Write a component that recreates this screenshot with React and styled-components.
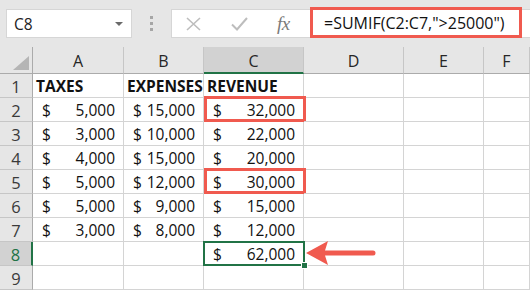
import React from "react";
import styled, { createGlobalStyle, css } from "styled-components";

const Global = createGlobalStyle`
  html, body { margin: 0; padding: 0; background: #fff; }
  body { font-family: "Open Sans", "Noto Sans", sans-serif; }
  #root { width: 530px; height: 290px; overflow: hidden; }
`;

const Page = styled.div`
  width: 530px;
  height: 290px;
  display: flex;
  flex-direction: column;
  overflow: hidden;
  background: #fff;
`;

const Toolbar = styled.div`
  height: 47px;
  flex: none;
  background: #e6e6e6;
  display: flex;
  align-items: flex-start;
  padding: 9px 0 0 6px;
  box-sizing: border-box;
`;

const NameBox = styled.div`
  width: 126px;
  height: 29px;
  box-sizing: border-box;
  background: #fff;
  border: 1px solid #d6d6d6;
  display: flex;
  align-items: center;
  justify-content: space-between;
  padding: 0 8px 0 7px;
  font-size: 15.5px;
  color: #222;
`;

const Caret = styled.span`
  width: 0;
  height: 0;
  border-left: 4px solid transparent;
  border-right: 4px solid transparent;
  border-top: 4px solid #6a6a6a;
`;

const Grip = styled.div`
  width: 39px;
  height: 29px;
  display: flex;
  flex-direction: column;
  align-items: center;
  justify-content: center;
  gap: 3px;
`;

const Dot = styled.span`
  width: 3px;
  height: 3px;
  background: #a6a6a6;
`;

const FormulaBox = styled.div`
  flex: 1;
  height: 29px;
  box-sizing: border-box;
  background: #fff;
  border: 1px solid #d6d6d6;
  border-right: none;
  display: flex;
  align-items: center;
  padding-left: 14px;
`;

const IconSlot = styled.span`
  width: ${(p) => p.$w}px;
  display: flex;
  align-items: center;
  justify-content: flex-start;
  flex: none;
`;

const Fx = styled.span`
  font-family: "Liberation Serif", "DejaVu Serif", serif;
  font-style: italic;
  font-size: 19px;
  color: #7a7a7a;
  width: 33px;
  flex: none;
  letter-spacing: -0.5px;
`;

const FormulaText = styled.div`
  width: 212px;
  height: 31px;
  box-sizing: border-box;
  border: 3px solid #f05a4f;
  margin-top: -2px;
  display: flex;
  align-items: center;
  padding-left: 11px;
  font-size: 16px;
  color: #111;
  white-space: nowrap;
`;

const Grid = styled.div`
  display: grid;
  grid-template-columns: 33px 91px 80px 100px 100px 80px 46px;
  grid-template-rows: 27px repeat(9, 24px);
  font-size: 15.5px;
  color: #111;
`;

const ColHead = styled.div`
  box-sizing: border-box;
  background: ${(p) => (p.$active ? "#d2d2d2" : "#e6e6e6")};
  border-right: 1px solid #c6c6c6;
  border-bottom: ${(p) => (p.$active ? "2px solid #217346" : "1px solid #ababab")};
  display: flex;
  align-items: center;
  justify-content: center;
  padding-top: 2px;
  color: #262626;
  font-size: 16px;
`;

const Corner = styled.div`
  box-sizing: border-box;
  background: #e6e6e6;
  border-right: 1px solid #ababab;
  border-bottom: 1px solid #ababab;
  display: flex;
  align-items: flex-end;
  justify-content: flex-end;
  padding: 0 3px 3px 0;
`;

const RowHead = styled.div`
  box-sizing: border-box;
  background: ${(p) => (p.$active ? "#d2d2d2" : "#e6e6e6")};
  border-right: ${(p) => (p.$active ? "2px solid #217346" : "1px solid #ababab")};
  border-bottom: 1px solid #c6c6c6;
  display: flex;
  align-items: center;
  justify-content: center;
  color: ${(p) => (p.$active ? "#217346" : "#3a3a3a")};
  font-size: 16.5px;
  padding-top: 1px;
`;

const Cell = styled.div`
  position: relative;
  box-sizing: border-box;
  border-right: 1px solid #d4d4d4;
  border-bottom: 1px solid #d4d4d4;
  display: flex;
  align-items: center;
  justify-content: space-between;
  padding: 1px 8px 0 9px;
  white-space: nowrap;
  font-weight: ${(p) => (p.$bold ? 700 : 400)};
  ${(p) =>
    p.$bold &&
    css`
      padding-left: 3px;
      overflow: visible;
    `}
  ${(p) =>
    p.$mark &&
    css`
      &::after {
        content: "";
        position: absolute;
        left: 0;
        top: -2px;
        right: -3px;
        bottom: -1px;
        border: 3px solid #f05a4f;
        pointer-events: none;
      }
    `}
  ${(p) =>
    p.$selected &&
    css`
      &::after {
        content: "";
        position: absolute;
        left: -1px;
        top: -1px;
        right: -2px;
        bottom: -1px;
        border: 2px solid #217346;
        pointer-events: none;
      }
      &::before {
        content: "";
        position: absolute;
        right: -5px;
        bottom: -4px;
        width: 5px;
        height: 5px;
        background: #217346;
        border: 1px solid #fff;
        z-index: 2;
      }
    `}
`;

const Arrow = styled.svg`
  position: absolute;
  left: 2px;
  top: -2px;
  overflow: visible;
`;

const data = [
  ["5,000", "15,000", "32,000"],
  ["3,000", "10,000", "22,000"],
  ["4,000", "15,000", "20,000"],
  ["5,000", "12,000", "30,000"],
  ["5,000", "9,000", "15,000"],
  ["3,000", "8,000", "12,000"],
];

const cols = ["A", "B", "C", "D", "E", "F"];

function Money({ v, mark, selected }) {
  return (
    <Cell $mark={mark} $selected={selected}>
      <span>$</span>
      <span>{v}</span>
    </Cell>
  );
}

export default function App() {
  return (
    <Page>
      <Global />
      <Toolbar>
        <NameBox>
          <span>C8</span>
          <Caret />
        </NameBox>
        <Grip>
          <Dot />
          <Dot />
          <Dot />
        </Grip>
        <FormulaBox>
          <IconSlot $w={45}>
            <svg width="15" height="14" viewBox="0 0 15 14">
              <path d="M1 1 L14 13 M14 1 L1 13" stroke="#bdbdbd" strokeWidth="1.6" fill="none" />
            </svg>
          </IconSlot>
          <IconSlot $w={46}>
            <svg width="17" height="14" viewBox="0 0 17 14">
              <path d="M1 7.5 L6 12.5 L16 1" stroke="#bdbdbd" strokeWidth="2" fill="none" />
            </svg>
          </IconSlot>
          <Fx>fx</Fx>
          <FormulaText>=SUMIF(C2:C7,"&gt;25000")</FormulaText>
        </FormulaBox>
      </Toolbar>
      <Grid>
        <Corner>
          <svg width="16" height="14" viewBox="0 0 16 14">
            <path d="M16 0 L16 14 L0 14 Z" fill="#b5b5b5" />
          </svg>
        </Corner>
        {cols.map((c) => (
          <ColHead key={c} $active={c === "C"}>
            {c}
          </ColHead>
        ))}

        <RowHead>1</RowHead>
        <Cell $bold>TAXES</Cell>
        <Cell $bold>EXPENSES</Cell>
        <Cell $bold>REVENUE</Cell>
        <Cell />
        <Cell />
        <Cell />

        {data.map((r, i) => (
          <React.Fragment key={i}>
            <RowHead>{i + 2}</RowHead>
            <Money v={r[0]} />
            <Money v={r[1]} />
            <Money v={r[2]} mark={i === 0 || i === 3} />
            <Cell />
            <Cell />
            <Cell />
          </React.Fragment>
        ))}

        <RowHead $active>8</RowHead>
        <Cell />
        <Cell />
        <Money v="62,000" selected />
        <Cell>
          <Arrow width="70" height="26" viewBox="0 0 70 26">
            <path d="M0 13 L22 1 L19 10.5 L67 10.5 A2.5 2.5 0 0 1 67 15.5 L19 15.5 L22 25 Z" fill="#f05a4f" />
          </Arrow>
        </Cell>
        <Cell />
        <Cell />

        <RowHead>9</RowHead>
        <Cell />
        <Cell />
        <Cell />
        <Cell />
        <Cell />
        <Cell />
      </Grid>
    </Page>
  );
}
